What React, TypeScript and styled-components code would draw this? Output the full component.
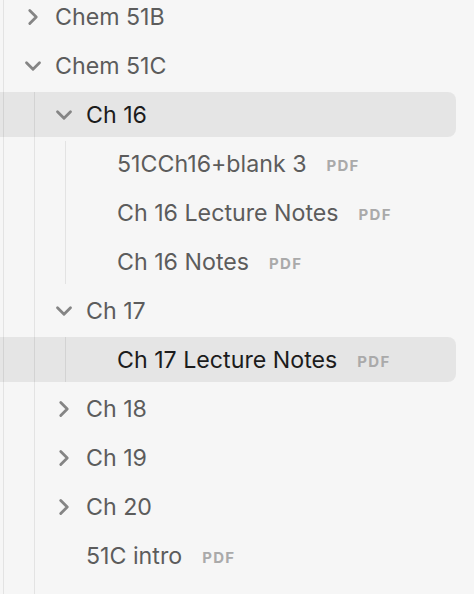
import React from "react";
import styled, { createGlobalStyle } from "styled-components";

const Global = createGlobalStyle`
  html, body {
    margin: 0;
    padding: 0;
    background: #f6f6f6;
    overflow: hidden;
  }
  body {
    font-family: Inter, "Noto Sans", "Liberation Sans", sans-serif;
    -webkit-font-smoothing: antialiased;
  }
`;

const Pane = styled.div`
  width: 474px;
  height: 594px;
  overflow: hidden;
  background: #f6f6f6;
  padding-left: 3px;
  box-sizing: border-box;
`;

const Tree = styled.div`
  margin-top: -6px;
  width: 452px;
  border-left: 1px solid #e3e3e3;
`;

const Children = styled.div<{ $tail?: boolean }>`
  margin-left: 30px;
  border-left: 1px solid #e3e3e3;
  padding-bottom: ${(p) => (p.$tail ? "40px" : "0")};
`;

const Row = styled.div<{ $depth: number; $active?: boolean }>`
  display: flex;
  align-items: center;
  box-sizing: border-box;
  height: 45px;
  padding-top: 3px;
  margin-bottom: 4px;
  margin-left: ${(p) => -(4 + p.$depth * 31)}px;
  padding-left: ${(p) => 4 + p.$depth * 31}px;
  background: ${(p) => (p.$active ? "rgba(0, 0, 0, 0.065)" : "transparent")};
  border-radius: 0 8px 8px 0;
  color: ${(p) => (p.$active ? "#1c1c1c" : "#5c5c5c")};
  font-size: 23.2px;
  white-space: nowrap;
`;

const Toggle = styled.span`
  width: 51px;
  flex: none;
  display: flex;
  align-items: center;
  justify-content: center;
  padding-left: 7px;
  margin-top: -3px;
  box-sizing: border-box;
  color: #858585;
  svg {
    display: block;
  }
`;

const Label = styled.span`
  line-height: 1;
`;

const Tag = styled.span`
  margin-left: 20px;
  font-size: 15px;
  font-weight: 700;
  letter-spacing: 1.3px;
  color: #aaaaaa;
  line-height: 1;
`;

const Chevron = ({ open }: { open: boolean }) => (
  <svg
    width="26"
    height="26"
    viewBox="0 0 24 24"
    fill="none"
    stroke="currentColor"
    strokeWidth="2.6"
    strokeLinecap="round"
    strokeLinejoin="round"
  >
    {open ? <path d="m6 9 6 6 6-6" /> : <path d="m9 18 6-6-6-6" />}
  </svg>
);

type Node = {
  name: string;
  pdf?: boolean;
  open?: boolean;
  folder?: boolean;
  active?: boolean;
  children?: Node[];
};

const data: Node[] = [
  { name: "Chem 51B", folder: true },
  {
    name: "Chem 51C",
    folder: true,
    open: true,
    children: [
      {
        name: "Ch 16",
        folder: true,
        open: true,
        active: true,
        children: [
          { name: "51CCh16+blank 3", pdf: true },
          { name: "Ch 16 Lecture Notes", pdf: true },
          { name: "Ch 16 Notes", pdf: true },
        ],
      },
      {
        name: "Ch 17",
        folder: true,
        open: true,
        children: [{ name: "Ch 17 Lecture Notes", pdf: true, active: true }],
      },
      { name: "Ch 18", folder: true },
      { name: "Ch 19", folder: true },
      { name: "Ch 20", folder: true },
      { name: "51C intro", pdf: true },
    ],
  },
];

const Item = ({ node, depth }: { node: Node; depth: number }) => (
  <>
    <Row $depth={depth} $active={node.active}>
      <Toggle>{node.folder && <Chevron open={!!node.open} />}</Toggle>
      <Label>{node.name}</Label>
      {node.pdf && <Tag>PDF</Tag>}
    </Row>
    {node.open && node.children && (
      <Children $tail={depth === 0}>
        {node.children.map((c) => (
          <Item key={c.name} node={c} depth={depth + 1} />
        ))}
      </Children>
    )}
  </>
);

export default function App() {
  return (
    <>
      <Global />
      <Pane>
        <Tree>
          {data.map((n) => (
            <Item key={n.name} node={n} depth={0} />
          ))}
        </Tree>
      </Pane>
    </>
  );
}
